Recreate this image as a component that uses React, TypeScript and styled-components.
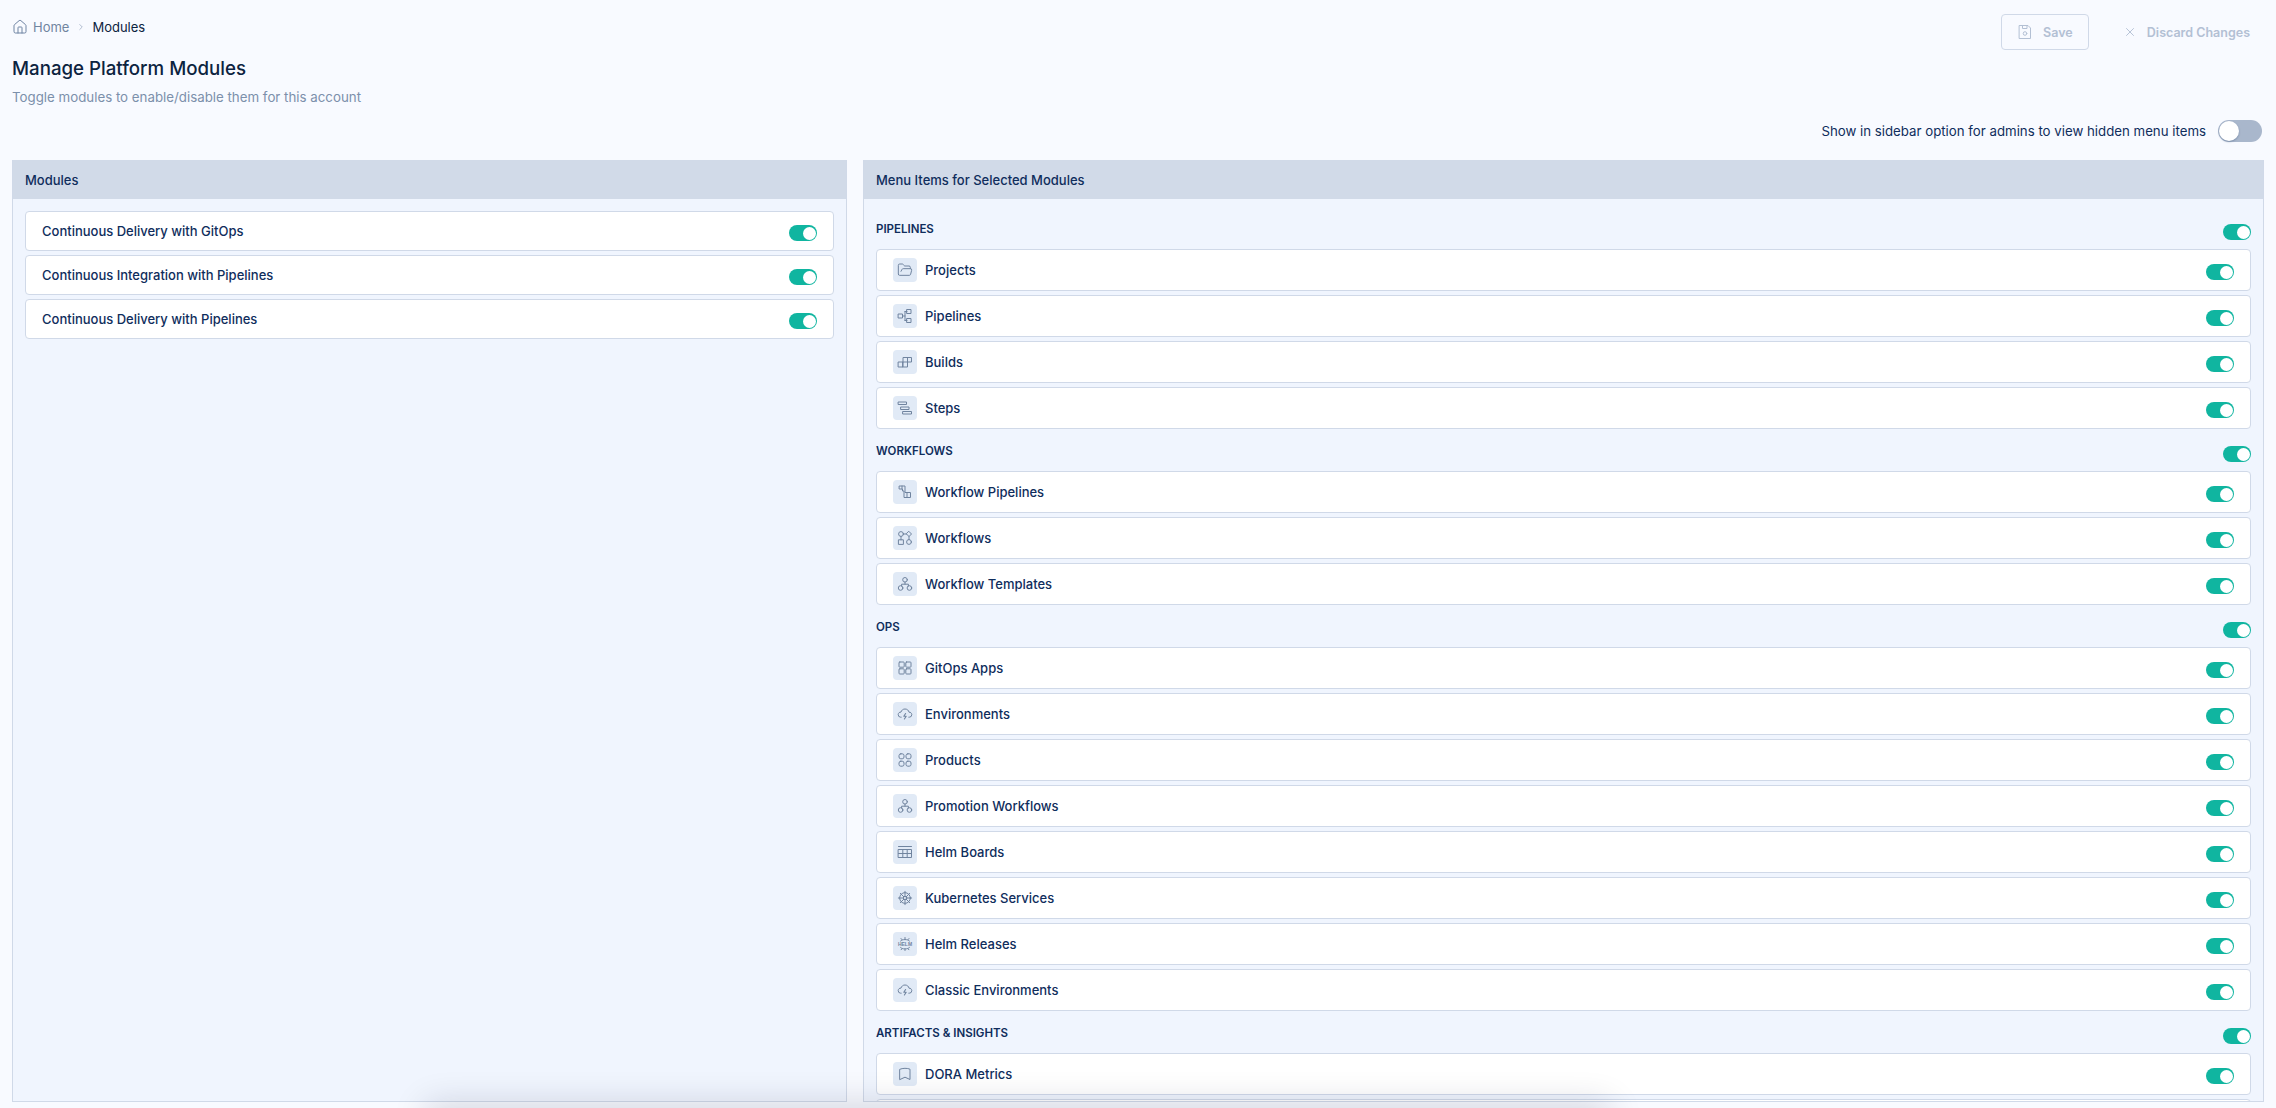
import React from 'react';
import styled, { createGlobalStyle } from 'styled-components';
import { FolderOpen, Home, X, ChevronRight, ShipWheel } from 'lucide-react';

const Global = createGlobalStyle`
  html, body { margin: 0; padding: 0; height: 100%; overflow: hidden; background: #f8faff; }
  * { box-sizing: border-box; }
  body { font-family: Inter, "Noto Sans", "Liberation Sans", sans-serif; color: #0f2d5c; }
`;

const Page = styled.div`
  height: 1108px;
  display: flex;
  flex-direction: column;
  padding: 0 12px 6px 12px;
  position: relative;
  overflow: hidden;
`;

const TopBar = styled.div`
  display: flex;
  justify-content: space-between;
  align-items: flex-start;
  height: 55px;
  padding-top: 14px;
`;

const Crumbs = styled.nav`
  display: flex;
  align-items: center;
  height: 26px;
  font-size: 13px;
  color: #6f84a3;
  svg { color: #6f84a3; }
`;

const CrumbLink = styled.span`
  margin-left: 5px;
  color: #71859f;
`;

const CrumbCurrent = styled.span`
  color: #0c2340;
  margin-left: 6px;
`;

const Separator = styled.span`
  display: flex;
  margin-left: 7px;
  svg { color: #a3b1c6; }
`;

const Actions = styled.div`
  display: flex;
  align-items: center;
  margin-right: 14px;
`;

const SaveButton = styled.button`
  width: 88px;
  height: 36px;
  display: flex;
  align-items: center;
  justify-content: center;
  gap: 10px;
  border: 1px solid #d0d9e8;
  border-radius: 4px;
  background: transparent;
  color: #b3c0d4;
  font: 600 12.5px Inter, sans-serif;
`;

const DiscardButton = styled.button`
  margin-left: 34px;
  display: flex;
  align-items: center;
  gap: 10px;
  border: 0;
  padding: 0;
  background: transparent;
  color: #b3c0d4;
  font: 600 12.5px Inter, sans-serif;
`;

const Title = styled.h1`
  margin: 0;
  font-size: 18.7px;
  line-height: 28px;
  font-weight: 500;
  color: #0c2340;
`;

const Subtitle = styled.p`
  margin: 4px 0 0 0;
  font-size: 13.3px;
  line-height: 20px;
  color: #7c90ab;
`;

const OptionRow = styled.div`
  display: flex;
  justify-content: flex-end;
  align-items: center;
  gap: 12px;
  height: 22px;
  margin-top: 13px;
  padding-right: 2px;
  font-size: 13.25px;
  color: #0f2d5c;
`;

const BigSwitch = styled.span`
  width: 44px;
  height: 22px;
  border-radius: 11px;
  background: #a9b7cc;
  display: flex;
  align-items: center;
  padding-left: 1px;
  &::before {
    content: '';
    width: 20px;
    height: 20px;
    border-radius: 50%;
    background: #fff;
    box-shadow: 0 1px 2px rgba(15, 45, 92, 0.3);
  }
`;

const Columns = styled.div`
  flex: 1;
  min-height: 0;
  margin-top: 18px;
  display: grid;
  grid-template-columns: 835px 1fr;
  gap: 16px;
`;

const Panel = styled.section`
  min-height: 0;
  display: flex;
  flex-direction: column;
  border: 1px solid #d0d9e8;
  border-top: 0;
  background: #f0f5fe;
  overflow: hidden;
`;

const PanelHeader = styled.header`
  height: 39px;
  flex: none;
  margin: 0 -1px;
  padding-left: 13px;
  display: flex;
  align-items: center;
  background: #d1dae8;
  font-size: 13px;
  font-weight: 500;
  color: #0f2d5c;
`;

const ModuleList = styled.div`
  padding: 12px 12px 0;
  display: flex;
  flex-direction: column;
  gap: 4px;
`;

const ModuleRow = styled.div`
  height: 40px;
  display: flex;
  align-items: center;
  justify-content: space-between;
  padding: 0 16px;
  background: #fff;
  border: 1px solid #d0d9e8;
  border-radius: 4px;
  font-size: 13px;
  font-weight: 500;
`;

const Toggle = styled.span`
  flex: none;
  width: 28px;
  height: 16px;
  margin-top: 4px;
  border-radius: 8px;
  background: #10b5a0;
  display: flex;
  align-items: center;
  justify-content: flex-end;
  padding-right: 1px;
  &::before {
    content: '';
    width: 13px;
    height: 13px;
    border-radius: 50%;
    background: #fff;
  }
`;

const MenuBody = styled.div`
  padding: 21px 12px 0 12px;
  display: flex;
  flex-direction: column;
  gap: 13px;
`;

const Group = styled.div`
  display: flex;
  flex-direction: column;
`;

const GroupHead = styled.div`
  display: flex;
  justify-content: space-between;
  align-items: flex-start;
  height: 20px;
  margin-bottom: 9px;
`;

const GroupTitle = styled.span`
  font-size: 11.5px;
  line-height: 19px;
  font-weight: 600;
  text-transform: uppercase;
  color: #0f2d5c;
`;

const ItemList = styled.div`
  display: flex;
  flex-direction: column;
  gap: 4px;
`;

const ItemRow = styled.div`
  height: 42px;
  flex: none;
  display: flex;
  align-items: center;
  gap: 8px;
  padding: 0 16px 0 16px;
  background: #fff;
  border: 1px solid #d0d9e8;
  border-radius: 4px;
  font-size: 13px;
  font-weight: 500;
`;

const ItemLabel = styled.span`
  flex: 1;
`;

const IconBox = styled.span`
  width: 24px;
  height: 24px;
  flex: none;
  border-radius: 4px;
  background: #e1eaf6;
  display: flex;
  align-items: center;
  justify-content: center;
  color: #70849f;
`;

const BottomGlow = styled.div`
  position: absolute;
  left: 430px;
  right: 670px;
  bottom: -26px;
  height: 26px;
  background: #000;
  box-shadow: 0 0 34px 4px rgba(20, 20, 50, 0.16);
  pointer-events: none;
`;

const Ico: React.FC<{ children: React.ReactNode }> = ({ children }) => (
  <svg width="16" height="16" viewBox="0 0 16 16" fill="none" stroke="currentColor" strokeWidth="1" strokeLinecap="round" strokeLinejoin="round">
    {children}
  </svg>
);

const SaveIcon = () => (
  <Ico>
    <path d="M2.5 1.5H11L13.5 4V14.5H2.5Z" />
    <path d="M5.5 1.5V4.5H10V1.5" />
    <circle cx="8" cy="9.5" r="1.8" />
  </Ico>
);
const PipelinesIcon = () => (
  <Ico>
    <rect x="1.5" y="6" width="4" height="4" />
    <rect x="10" y="1.5" width="4" height="4" />
    <rect x="10" y="10.5" width="4" height="4" />
    <path d="M5.5 8H8M8 3.5V12.5M8 3.5H10M8 12.5H10" />
  </Ico>
);
const BuildsIcon = () => (
  <Ico>
    <rect x="1.5" y="8" width="4.5" height="5" />
    <rect x="6" y="8" width="4.5" height="5" />
    <path d="M6 8V3.5H14.5V8H10.5M10.5 3.5V8" />
  </Ico>
);
const StepsIcon = () => (
  <Ico>
    <rect x="1.5" y="2" width="8" height="2.5" />
    <rect x="4" y="7" width="8" height="2.5" />
    <rect x="6" y="11.5" width="8.5" height="2.5" />
  </Ico>
);
const WorkflowPipesIcon = () => (
  <Ico>
    <path d="M2.5 2H8V8.5H13.5V13.5H7V7H5.5V5H2.5Z" />
    <path d="M5 2V5M10 8.5V13.5" />
  </Ico>
);
const WorkflowsIcon = () => (
  <Ico>
    <circle cx="4" cy="4" r="2.4" />
    <rect x="1.8" y="9.8" width="4.6" height="4.6" />
    <circle cx="12" cy="12" r="2.4" />
    <path d="M12 1.5L14.5 4L12 6.5L9.5 4Z" />
    <path d="M6.4 4H9.5M4 6.4V9.8M12 6.5V9.6" />
  </Ico>
);
const TreeIcon = () => (
  <Ico>
    <circle cx="8" cy="3.8" r="2.3" />
    <circle cx="3.6" cy="12" r="2.3" />
    <circle cx="12.4" cy="12" r="2.3" />
    <path d="M8 6.1V8.2M4.6 10V8.2H11.4V10" />
  </Ico>
);
const GridIcon = () => (
  <Ico>
    <rect x="2" y="2" width="5.2" height="5.2" rx="0.8" />
    <rect x="8.8" y="2" width="5.2" height="5.2" rx="0.8" />
    <rect x="2" y="8.8" width="5.2" height="5.2" rx="0.8" />
    <rect x="8.8" y="8.8" width="5.2" height="5.2" rx="0.8" />
  </Ico>
);
const CloudIcon = () => (
  <Ico>
    <path d="M4.2 11.2H3.6A2.6 2.6 0 0 1 1.2 8.6C1.2 7 2.5 6 4 6.1C4.5 4.2 6 3 8 3C10.2 3 11.7 4.4 12 6.2C13.6 6.1 14.8 7.2 14.8 8.7A2.6 2.6 0 0 1 12.3 11.2H11.8" />
    <path d="M8.6 7.5L6.8 10.2H9.2L7.4 13" strokeWidth="1.1" />
  </Ico>
);
const ProductsIcon = () => (
  <Ico>
    <rect x="2" y="1.8" width="5" height="5" rx="1.8" />
    <rect x="9" y="1.8" width="5" height="5" rx="1.8" />
    <rect x="2" y="9.2" width="5" height="5" rx="1.8" />
    <rect x="9" y="9.2" width="5" height="5" rx="1.8" />
  </Ico>
);
const BoardIcon = () => (
  <Ico>
    <path d="M1.5 2.5H14.5" />
    <rect x="1.5" y="5.5" width="13" height="8" />
    <path d="M1.5 9.5H14.5M5.8 5.5V13.5M10.2 5.5V13.5" />
  </Ico>
);
const HelmText = styled.text`
  font: 700 5px "Liberation Sans", sans-serif;
  fill: currentColor;
  stroke: none;
`;
const HelmIcon = () => (
  <Ico>
    <path d="M3.5 5C5 3 11 3 12.5 5M8 1.5V3M4 2.5L5 3.6M12 2.5L11 3.6" />
    <HelmText x="8" y="9.8" textAnchor="middle">HELM</HelmText>
    <path d="M3.5 11.5C5 13.5 11 13.5 12.5 11.5M8 13V14.5M4 13.8L5 12.8M12 13.8L11 12.8" />
  </Ico>
);
const BookmarkIcon = () => (
  <Ico>
    <path d="M3 3.2C5.5 2 10.5 2 13 3.2V13.5L8 11.2L3 13.5Z" />
  </Ico>
);

type Item = { label: string; icon: React.ReactNode };
type Grp = { title: string; items: Item[] };

const lucideProps = { size: 16, strokeWidth: 1.5 };

const groups: Grp[] = [
  {
    title: 'Pipelines',
    items: [
      { label: 'Projects', icon: <FolderOpen {...lucideProps} /> },
      { label: 'Pipelines', icon: <PipelinesIcon /> },
      { label: 'Builds', icon: <BuildsIcon /> },
      { label: 'Steps', icon: <StepsIcon /> },
    ],
  },
  {
    title: 'Workflows',
    items: [
      { label: 'Workflow Pipelines', icon: <WorkflowPipesIcon /> },
      { label: 'Workflows', icon: <WorkflowsIcon /> },
      { label: 'Workflow Templates', icon: <TreeIcon /> },
    ],
  },
  {
    title: 'Ops',
    items: [
      { label: 'GitOps Apps', icon: <GridIcon /> },
      { label: 'Environments', icon: <CloudIcon /> },
      { label: 'Products', icon: <ProductsIcon /> },
      { label: 'Promotion Workflows', icon: <TreeIcon /> },
      { label: 'Helm Boards', icon: <BoardIcon /> },
      { label: 'Kubernetes Services', icon: <ShipWheel {...lucideProps} /> },
      { label: 'Helm Releases', icon: <HelmIcon /> },
      { label: 'Classic Environments', icon: <CloudIcon /> },
    ],
  },
  {
    title: 'Artifacts & Insights',
    items: [{ label: 'DORA Metrics', icon: <BookmarkIcon /> }],
  },
];

const modules = [
  'Continuous Delivery with GitOps',
  'Continuous Integration with Pipelines',
  'Continuous Delivery with Pipelines',
];

export default function App() {
  return (
    <Page>
      <Global />
      <TopBar>
        <Crumbs>
          <Home size={16} strokeWidth={1.5} />
          <CrumbLink>Home</CrumbLink>
          <Separator><ChevronRight size={10} strokeWidth={2} /></Separator>
          <CrumbCurrent>Modules</CrumbCurrent>
        </Crumbs>
        <Actions>
          <SaveButton><SaveIcon />Save</SaveButton>
          <DiscardButton><X size={14} strokeWidth={1.6} />Discard Changes</DiscardButton>
        </Actions>
      </TopBar>
      <Title>Manage Platform Modules</Title>
      <Subtitle>Toggle modules to enable/disable them for this account</Subtitle>
      <OptionRow>
        Show in sidebar option for admins to view hidden menu items
        <BigSwitch />
      </OptionRow>
      <Columns>
        <Panel>
          <PanelHeader>Modules</PanelHeader>
          <ModuleList>
            {modules.map((m) => (
              <ModuleRow key={m}>
                {m}
                <Toggle />
              </ModuleRow>
            ))}
          </ModuleList>
        </Panel>
        <Panel>
          <PanelHeader>Menu Items for Selected Modules</PanelHeader>
          <MenuBody>
            {groups.map((g) => (
              <Group key={g.title}>
                <GroupHead>
                  <GroupTitle>{g.title}</GroupTitle>
                  <Toggle />
                </GroupHead>
                <ItemList>
                  {g.items.map((it) => (
                    <ItemRow key={it.label}>
                      <IconBox>{it.icon}</IconBox>
                      <ItemLabel>{it.label}</ItemLabel>
                      <Toggle />
                    </ItemRow>
                  ))}
                  {g.title === 'Artifacts & Insights' && <ItemRow />}
                </ItemList>
              </Group>
            ))}
          </MenuBody>
        </Panel>
      </Columns>
      <BottomGlow />
    </Page>
  );
}
